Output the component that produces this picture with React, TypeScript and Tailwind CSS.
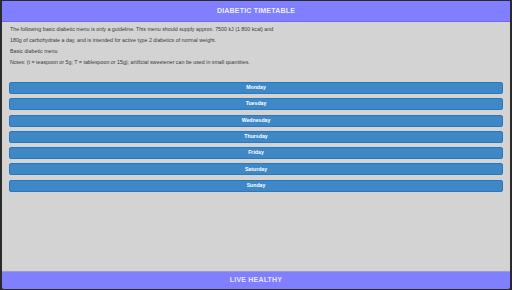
const days = ["Monday", "Tuesday", "Wednesday", "Thursday", "Friday", "Saturday", "Sunday"]

export default function App() {
  return (
    <div
      className="w-[512px] h-[290px] bg-[#2a2a2a] pl-[2px] pr-[2px] pt-[1px] pb-[1px] flex flex-col"
      style={{ fontFamily: '"Liberation Sans", Arial, sans-serif' }}
    >
      <header className="h-[21px] shrink-0 bg-[#7f7fff] border-b border-[#6c6ce0] flex items-center justify-center">
        <h1 className="text-[7px] font-bold text-[#ececff] tracking-[0.2px]">DIABETIC TIMETABLE</h1>
      </header>

      <main className="flex-1 bg-[#d3d3d3] px-[7px] pt-[2px]">
        <div className="text-[5.3px] text-[#3a3a3a] pl-[1px]">
          <p className="leading-[11px] my-0">
            The following basic diabetic menu is only a guideline. This menu should supply approx. 7500 kJ (1 800 kcal) and
          </p>
          <p className="leading-[11px] my-0">
            180g of carbohydrate a day, and is intended for active type 2 diabetics of normal weight.
          </p>
          <p className="leading-[11px] my-0">Basic diabetic menu</p>
          <p className="leading-[11px] my-0">
            Notes: (t = teaspoon or 5g; T = tablespoon or 15g); artificial sweetener can be used in small quantities.
          </p>
        </div>

        <div className="mt-[14px] flex flex-col gap-[4.3px]">
          {days.map((d) => (
            <button
              key={d}
              className="h-[12px] w-full rounded-[2px] bg-[#3f88c8] border border-[#2f78b8] text-white text-[5.2px] font-bold flex items-center justify-center"
            >
              {d}
            </button>
          ))}
        </div>
      </main>

      <footer className="h-[18px] shrink-0 bg-[#7f7fff] border-t border-[#9b9bd0] rounded-b-[2px] flex items-center justify-center">
        <span className="text-[7px] font-bold text-[#e4e4f4] tracking-[0.2px]">LIVE HEALTHY</span>
      </footer>
    </div>
  )
}
